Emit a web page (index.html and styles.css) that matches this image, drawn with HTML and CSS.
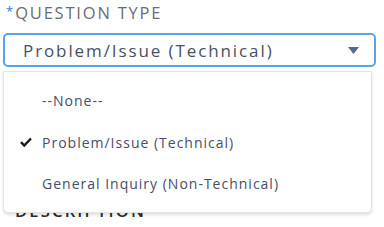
FILE: index.html
```html
<!DOCTYPE html>
<html lang="en">
<head>
    <meta charset="UTF-8">
    <title>Question Type</title>
    <link rel="stylesheet" href="styles.css">
</head>
<body>
    <div class="field question">
        <div class="field-label"><abbr title="required">*</abbr>QUESTION TYPE</div>
        <div class="combo">
            <div class="combo-input">
                <span>Problem/Issue (Technical)</span>
                <svg class="caret" width="11" height="7" viewBox="0 0 11 7"><path d="M0 0h11L5.5 7z" fill="#54698d"/></svg>
            </div>
            <div class="listbox">
                <div class="option"><span class="check"></span>--None--</div>
                <div class="option selected">
                    <span class="check">
                        <svg width="12" height="10" viewBox="0 0 12 10"><path d="M1 5.2l3.2 3.3L11 1.5" fill="none" stroke="#16191f" stroke-width="2.4"/></svg>
                    </span>Problem/Issue (Technical)
                </div>
                <div class="option"><span class="check"></span>General Inquiry (Non-Technical)</div>
            </div>
        </div>
    </div>
    <div class="field">
        <div class="field-label dark">DESCRIPTION</div>
    </div>
</body>
</html>
```

FILE: styles.css
```css
body {
    margin: 0;
    min-height: 100vh;
    background: #fff;
    font-family: "Open Sans", Arial, sans-serif;
    color: #3e4a5e;
}
.field {
    padding: 0 8px 0 3px;
}
.field.question {
    margin-bottom: 133px;
}
.field-label {
    font-size: 16.5px;
    line-height: 20px;
    padding: 1px 0 0 3px;
    color: #6b6d72;
    letter-spacing: 1.8px;
}
.field-label abbr {
    color: #2f7fd6;
    text-decoration: none;
    font-size: 13px;
    letter-spacing: 0;
    margin-right: 2px;
    vertical-align: 3px;
}
.field-label.dark {
    color: #2b2b2b;
    font-weight: 600;
    padding-left: 12px;
    letter-spacing: 2.2px;
}
.combo {
    position: relative;
    margin-top: 10px;
}
.combo-input {
    display: flex;
    justify-content: space-between;
    align-items: center;
    height: 30px;
    border: 2px solid #5aa3ec;
    border-radius: 5px;
    padding: 0 15px 0 18px;
    font-size: 17px;
    letter-spacing: 1.9px;
    color: #4a4f63;
}
.listbox {
    position: absolute;
    z-index: 2;
    top: 38px;
    left: 0;
    right: 4px;
    padding: 8px 0 7px;
    background: #fff;
    border: 1px solid #e4e4e4;
    border-radius: 0 0 5px 5px;
    box-shadow: 0 2px 3px rgba(0, 0, 0, 0.12);
}
.option {
    display: flex;
    align-items: center;
    height: 41.5px;
    font-size: 14px;
    letter-spacing: 1px;
    color: #474e68;
}
.check {
    width: 22px;
    margin-left: 16px;
    display: flex;
    align-items: center;
}
```
